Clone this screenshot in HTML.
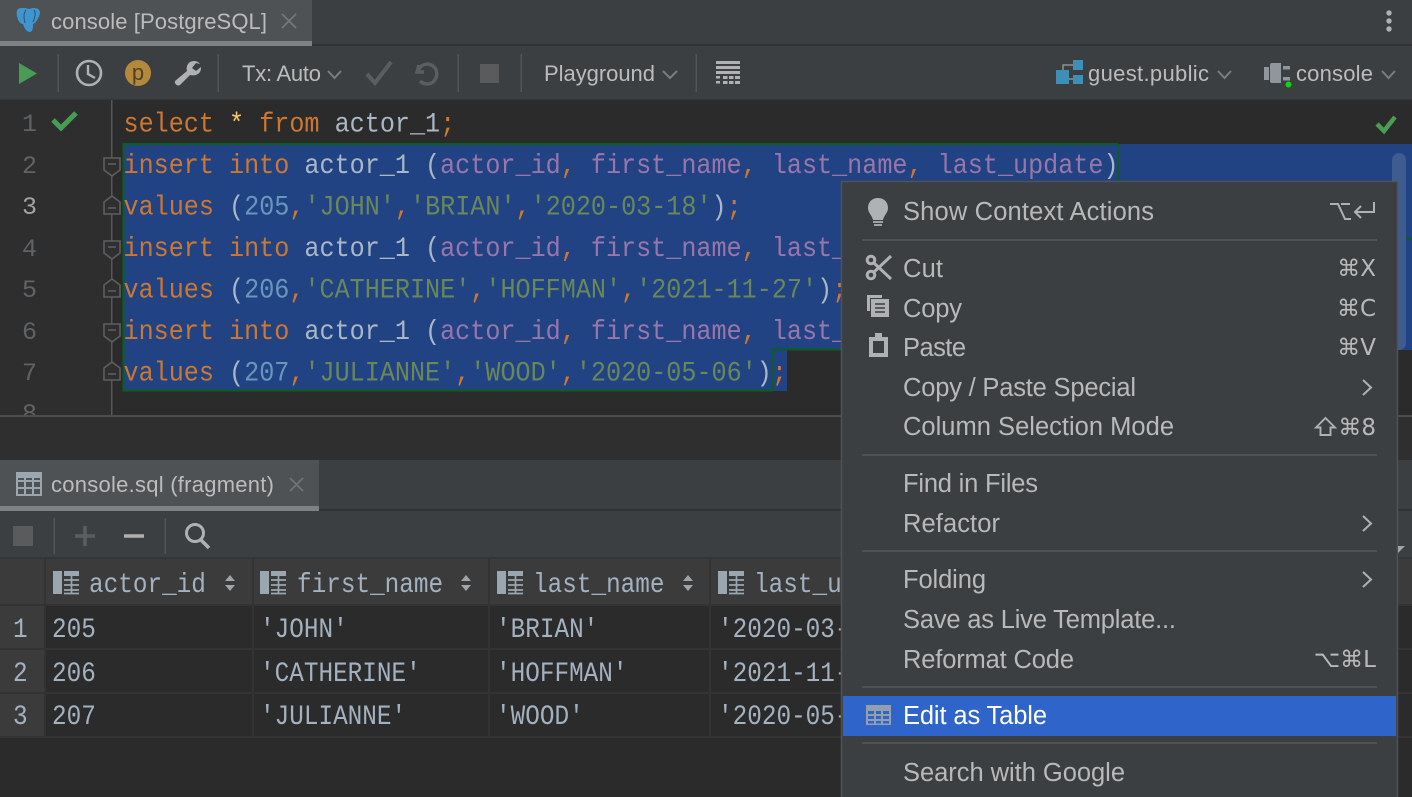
<!DOCTYPE html>
<html><head><meta charset="utf-8"><style>
html,body{margin:0;padding:0;background:#2b2b2b;width:1412px;height:797px;overflow:hidden}
svg{display:block;position:absolute;left:0;top:0}
text{white-space:pre}
.s{font-family:"Liberation Sans","DejaVu Sans",sans-serif;font-size:25.5px;fill:#b9b9b9}
.t{font-family:"Liberation Sans","DejaVu Sans",sans-serif;font-size:22px;fill:#bcbcbc}
.k{font-family:"DejaVu Sans","Liberation Sans",sans-serif;font-size:23px;fill:#b9b9b9}
.c{font-family:"Liberation Mono",monospace;font-size:28px}
.h{font-family:"Liberation Mono",monospace;font-size:28px;fill:#a3b1c0}
.n{font-family:"Liberation Mono",monospace;font-size:25px;fill:#606366}
.o{fill:#cc7832}.w{fill:#a9b7c6}.p{fill:#9876aa}.b{fill:#6897bb}.g{fill:#6a8759}.y{fill:#ffc66d}
</style></head><body>
<svg width="1412" height="797" viewBox="0 0 1412 797" xmlns="http://www.w3.org/2000/svg">
<defs>
<g id="fu" fill="none" stroke="#5c5f61" stroke-width="1.6"><path d="M0-10 L-8-4 V8 H8 V-4 Z" fill="#2f2f2f"/><path d="M-4 2H4"/></g>
<g id="fd" fill="none" stroke="#5c5f61" stroke-width="1.6"><path d="M-8-8 H8 V4 L0 10 L-8 4 Z" fill="#2f2f2f"/><path d="M-4-2H4"/></g>
<g id="ci" fill="none" stroke="#9aa7b0"><rect x="0" y="0" width="9" height="23" fill="#9aa7b0" stroke="none"/><rect x="11" y="0" width="15" height="5" fill="#9aa7b0" stroke="none"/><path d="M11 9H26M11 14H26M11 19H26M11 22.500H26M18.500 5V23" stroke-width="1.700"/></g>
<g id="so" fill="#a0a4a6"><path d="M-5-2 L0-8 L5-2Z"/><path d="M-5 2 L0 8 L5 2Z"/></g>
</defs>

<!-- top bar -->
<rect width="1412" height="100" fill="#3c3f41"/>
<rect width="312" height="41" fill="#4e5254"/>
<rect y="41" width="312" height="5" fill="#7e8284"/>
<rect x="312" y="44" width="1100" height="2" fill="#323232"/>
<rect y="99" width="1412" height="1" fill="#333537"/>
<path d="M21 8 C17 8 16 12 17 16 C18 21 20 24 23 24 C24 27 26 32 30 32 C33 32 33 27 33 24 C36 23 39 18 40 13 C40 9 37 8 33 8 L29 9 L25 8Z" fill="#3f95cd"/>
<path d="M26 10 C23 14 24 19 25 23 M34 10 C36 13 35 18 33 22" fill="none" stroke="#2d5470" stroke-width="1"/>
<text class="t" x="51" y="29" textLength="216">console [PostgreSQL]</text>
<path d="M282 14 L296 28 M296 14 L282 28" stroke="#73777a" stroke-width="1.8"/>
<circle cx="1389" cy="13" r="2.700" fill="#b0b0b0"/><circle cx="1389" cy="21" r="2.700" fill="#b0b0b0"/><circle cx="1389" cy="29" r="2.700" fill="#b0b0b0"/>

<!-- toolbar -->
<path d="M19 63 L37 73.500 L19 84Z" fill="#499c54"/>
<g fill="#515557"><rect x="57.500" y="54" width="1.500" height="38"/><rect x="217.500" y="54" width="1.500" height="38"/><rect x="457.500" y="54" width="1.500" height="38"/><rect x="520.500" y="54" width="1.500" height="38"/><rect x="695.500" y="54" width="1.500" height="38"/></g>
<circle cx="89" cy="73" r="12" fill="none" stroke="#afb1b3" stroke-width="2.600"/>
<path d="M88 65 V74 L95 78" fill="none" stroke="#afb1b3" stroke-width="2.400"/>
<circle cx="138" cy="73" r="13" fill="#b38a3c"/>
<text x="138" y="80" text-anchor="middle" font-family="Liberation Sans" font-size="22" fill="#50402a">p</text>
<path d="M200 64 C198 61 194 60 190 62 C187 64 186 68 187 71 L175 81 C174 83 177 87 180 85 L190 75 C194 76 198 75 200 72 C201 70 201 69 201 67 L196 71 L192 68 L196 63Z" fill="#afb1b3"/>
<text class="t" x="242" y="81" textLength="79">Tx: Auto</text>
<path d="M328 71 L334.500 78 L341 71" fill="none" stroke="#7a7e81" stroke-width="2"/>
<path d="M367 74 L375 83 L391 62" fill="none" stroke="#5b5e60" stroke-width="4"/>
<path d="M419 65 L417 72 L424 72 M418 71 C421 63 430 62 435 68 C439 74 436 83 428 84 C425 84 422 83 420 81" fill="none" stroke="#5b5e60" stroke-width="3.400"/>
<rect x="480" y="64" width="19" height="19" fill="#5a5b5c"/>
<text class="t" x="544" y="81" textLength="111">Playground</text>
<path d="M663 71 L670 78 L677 71" fill="none" stroke="#7a7e81" stroke-width="2"/>
<g fill="#afb1b3"><rect x="716" y="61" width="24" height="3"/><rect x="716" y="66" width="24" height="3"/><rect x="716" y="71" width="24" height="3"/><rect x="716" y="76" width="4" height="2.500"/><rect x="716" y="81" width="4" height="2.500"/><rect x="723" y="76" width="4.500" height="3"/><rect x="729" y="76" width="4.500" height="3"/><rect x="735" y="76" width="5" height="3"/><rect x="723" y="81" width="4.500" height="3"/><rect x="729" y="81" width="4.500" height="3"/><rect x="735" y="81" width="5" height="3"/></g>

<rect x="1056" y="70" width="13" height="14" fill="#3d8fb5"/><rect x="1073" y="60" width="10" height="10" fill="#3d8fb5"/><rect x="1073" y="75" width="10" height="9" fill="#3d8fb5"/>
<path d="M1063 70 V65 H1073 M1069 79 H1073" fill="none" stroke="#8a9299" stroke-width="1.500"/>
<text class="t" x="1088" y="81" textLength="121">guest.public</text>
<path d="M1218 71 L1224.500 78 L1231 71" fill="none" stroke="#7a7e81" stroke-width="2"/>
<path d="M1264 67 H1269 V80 H1264 Z" fill="#8f979e"/><path d="M1270 65 Q1270 63 1272 63 H1281 V83 H1272 Q1270 83 1270 81Z" fill="#8f979e"/><rect x="1283" y="66" width="7" height="3.500" fill="#8f979e"/><rect x="1283" y="77" width="7" height="3.500" fill="#8f979e"/>
<circle cx="1288.500" cy="84.500" r="3" fill="#0ed60e"/>
<text class="t" x="1296" y="81" textLength="77">console</text>
<path d="M1382 71 L1388.500 78 L1395 71" fill="none" stroke="#7a7e81" stroke-width="2"/>

<!-- editor -->
<rect y="100" width="1412" height="315" fill="#2b2b2b"/>
<rect y="100" width="112" height="315" fill="#2e2e2e"/>
<path d="M123 144 H1412 V350 H787 V391 H123Z" fill="#214283"/>
<path d="M123.500 391 V144 H1118 M772.500 391 V349.500 H842 M123 390.500 H773 M1118.500 144 V182 M1397 238.500 H1412" fill="none" stroke="#0f5c1f" stroke-width="2"/>
<rect x="1392" y="153" width="14" height="197" rx="7" fill="#3f5c91"/>
<rect x="1368" y="108" width="44" height="36" fill="#2b2b2b"/>
<path d="M1377 124 L1384 131 L1395 117" fill="none" stroke="#499c54" stroke-width="4.500"/>
<path d="M53 120 L61 128 L76 113" fill="none" stroke="#499c54" stroke-width="5"/>
<rect x="111" y="100" width="1.500" height="315" fill="#555759"/>
<use href="#fd" x="112" y="166"/><use href="#fu" x="112" y="206"/><use href="#fd" x="112" y="249"/><use href="#fu" x="112" y="289"/><use href="#fd" x="112" y="332"/><use href="#fu" x="112" y="372"/>

<g class="n">
<text x="22" y="131">1</text><text x="22" y="173">2</text><text x="22" y="214" fill="#a4a3a3" style="fill:#a4a3a3">3</text><text x="22" y="256">4</text><text x="22" y="297">5</text><text x="22" y="339">6</text><text x="22" y="380">7</text>
</g>
<svg x="0" y="400" width="60" height="15" viewBox="0 400 60 15"><text class="n" x="22" y="421">8</text></svg>

<text class="c" transform="translate(123.500 131.500) scale(.8976 1)"><tspan class="o">select </tspan><tspan class="y">*</tspan><tspan class="o"> from </tspan><tspan class="w">actor_1</tspan><tspan class="o">;</tspan></text>
<text class="c" transform="translate(123.500 173) scale(.8976 1)"><tspan class="o">insert into </tspan><tspan class="w">actor_1 (</tspan><tspan class="p">actor_id</tspan><tspan class="o">, </tspan><tspan class="p">first_name</tspan><tspan class="o">, </tspan><tspan class="p">last_name</tspan><tspan class="o">, </tspan><tspan class="p">last_update</tspan><tspan class="w">)</tspan></text>
<text class="c" transform="translate(123.500 214.500) scale(.8976 1)"><tspan class="o">values </tspan><tspan class="w">(</tspan><tspan class="b">205</tspan><tspan class="o">,</tspan><tspan class="g">'JOHN'</tspan><tspan class="o">,</tspan><tspan class="g">'BRIAN'</tspan><tspan class="o">,</tspan><tspan class="g">'2020-03-18'</tspan><tspan class="w">)</tspan><tspan class="o">;</tspan></text>
<text class="c" transform="translate(123.500 256) scale(.8976 1)"><tspan class="o">insert into </tspan><tspan class="w">actor_1 (</tspan><tspan class="p">actor_id</tspan><tspan class="o">, </tspan><tspan class="p">first_name</tspan><tspan class="o">, </tspan><tspan class="p">last_name</tspan><tspan class="o">, </tspan><tspan class="p">last_update</tspan><tspan class="w">)</tspan></text>
<text class="c" transform="translate(123.500 297.500) scale(.8976 1)"><tspan class="o">values </tspan><tspan class="w">(</tspan><tspan class="b">206</tspan><tspan class="o">,</tspan><tspan class="g">'CATHERINE'</tspan><tspan class="o">,</tspan><tspan class="g">'HOFFMAN'</tspan><tspan class="o">,</tspan><tspan class="g">'2021-11-27'</tspan><tspan class="w">)</tspan><tspan class="o">;</tspan></text>
<text class="c" transform="translate(123.500 339) scale(.8976 1)"><tspan class="o">insert into </tspan><tspan class="w">actor_1 (</tspan><tspan class="p">actor_id</tspan><tspan class="o">, </tspan><tspan class="p">first_name</tspan><tspan class="o">, </tspan><tspan class="p">last_name</tspan><tspan class="o">, </tspan><tspan class="p">last_update</tspan><tspan class="w">)</tspan></text>
<text class="c" transform="translate(123.500 380.500) scale(.8976 1)"><tspan class="o">values </tspan><tspan class="w">(</tspan><tspan class="b">207</tspan><tspan class="o">,</tspan><tspan class="g">'JULIANNE'</tspan><tspan class="o">,</tspan><tspan class="g">'WOOD'</tspan><tspan class="o">,</tspan><tspan class="g">'2020-05-06'</tspan><tspan class="w">)</tspan><tspan class="o">;</tspan></text>

<!-- divider + results -->
<rect y="415" width="1412" height="2" fill="#4c4d4e"/>
<rect y="417" width="1412" height="43" fill="#2f2f2f"/>
<rect y="460" width="1412" height="99" fill="#3c3f41"/>
<rect y="460" width="319" height="46" fill="#4e5254"/>
<rect y="506" width="319" height="5" fill="#7e8284"/>
<rect x="319" y="509" width="1093" height="2" fill="#323232"/>
<rect y="557" width="1412" height="2" fill="#333537"/>
<g fill="#9aa7b0"><rect x="16" y="473" width="26" height="5"/></g>
<path d="M17 473 H41 V495 H17Z M17 481H41 M17 488H41 M25 478V495 M33 478V495" fill="none" stroke="#9aa7b0" stroke-width="2"/>
<text class="t" x="51" y="492" textLength="223">console.sql (fragment)</text>
<path d="M290 478 L303 491 M303 478 L290 491" stroke="#6f7375" stroke-width="1.800"/>
<rect x="13" y="526" width="20" height="20" fill="#5a5b5c"/>
<rect x="53.500" y="518" width="1.500" height="36" fill="#515557"/><rect x="164.500" y="518" width="1.500" height="36" fill="#515557"/>
<path d="M85 526 V546 M75 536 H95" stroke="#5b5e60" stroke-width="3.500"/>
<path d="M124 536 H144" stroke="#afb1b3" stroke-width="3.500"/>
<circle cx="195" cy="533" r="8.500" fill="none" stroke="#afb1b3" stroke-width="3"/><path d="M201 540 L209 548" stroke="#afb1b3" stroke-width="3.500"/>

<rect y="559" width="1412" height="238" fill="#2b2b2b"/>
<rect y="559" width="1412" height="46" fill="#3b3b3b"/>
<rect y="605" width="44" height="132" fill="#3b3b3b"/>
<g fill="#333"><rect x="44" y="559" width="2" height="178"/><rect x="252" y="559" width="2" height="178"/><rect x="488" y="559" width="2" height="178"/><rect x="709" y="559" width="2" height="178"/><rect y="604" width="1412" height="2"/><rect y="648" width="1412" height="2"/><rect y="692" width="1412" height="2"/><rect y="736" width="1412" height="2"/></g>
<use href="#ci" x="53" y="571"/><use href="#ci" x="260" y="571"/><use href="#ci" x="497" y="571"/><use href="#ci" x="718" y="571"/>
<use href="#so" x="230" y="583"/><use href="#so" x="466" y="583"/><use href="#so" x="688" y="583"/>
<text class="h" transform="translate(89 592) scale(.87 1)">actor_id</text>
<text class="h" transform="translate(297 592) scale(.87 1)">first_name</text>
<text class="h" transform="translate(533 592) scale(.87 1)">last_name</text>
<text class="h" transform="translate(754 592) scale(.87 1)">last_update</text>
<text class="h" transform="translate(13 637) scale(.87 1)">1</text>
<text class="h" transform="translate(13 681) scale(.87 1)">2</text>
<text class="h" transform="translate(13 724) scale(.87 1)">3</text>
<text class="h" transform="translate(52 637) scale(.87 1)">205</text>
<text class="h" transform="translate(52 681) scale(.87 1)">206</text>
<text class="h" transform="translate(52 724) scale(.87 1)">207</text>
<text class="h" transform="translate(260 637) scale(.87 1)">'JOHN'</text>
<text class="h" transform="translate(260 681) scale(.87 1)">'CATHERINE'</text>
<text class="h" transform="translate(260 724) scale(.87 1)">'JULIANNE'</text>
<text class="h" transform="translate(496 637) scale(.87 1)">'BRIAN'</text>
<text class="h" transform="translate(496 681) scale(.87 1)">'HOFFMAN'</text>
<text class="h" transform="translate(496 724) scale(.87 1)">'WOOD'</text>
<text class="h" transform="translate(718 637) scale(.87 1)">'2020-03-18'</text>
<text class="h" transform="translate(718 681) scale(.87 1)">'2021-11-27'</text>
<text class="h" transform="translate(718 724) scale(.87 1)">'2020-05-06'</text>

<!-- context menu -->
<rect x="841.500" y="181.500" width="556" height="620" fill="#3c3f41" stroke="#505355" stroke-width="1.500"/>
<path d="M1398 546 H1405 L1398 553Z" fill="#a0a4a6"/>
<g fill="#505355"><rect x="862" y="239" width="515" height="2"/><rect x="862" y="454" width="515" height="2"/><rect x="862" y="550" width="515" height="2"/><rect x="862" y="686" width="515" height="2"/><rect x="862" y="742" width="515" height="2"/></g>
<rect x="843" y="696" width="553" height="40" fill="#2f65ca"/>

<path d="M878 198 C872 198 868 202 868 208 C868 213 872 215 873 220 H883 C884 215 888 213 888 208 C888 202 884 198 878 198Z" fill="#afb1b3"/><path d="M873 222 H883 M874 225 H882" stroke="#afb1b3" stroke-width="1.800"/>
<g fill="none" stroke="#afb1b3" stroke-width="3"><circle cx="871" cy="260" r="3.800"/><circle cx="871" cy="275" r="3.800"/><path d="M874 263 L891 279 M874 272 L891 256"/></g>
<path d="M867 295 H882 V298 H870 V311 H867Z" fill="#afb1b3"/><path d="M871 299 H889 V317 H871Z" fill="#afb1b3"/><path d="M875 304 H885 M875 308 H885 M875 312 H885" stroke="#3c3f41" stroke-width="1.600"/>
<path d="M869 337 H875 V333 H882 V337 H888 V357 H869Z M873 341 V353 H884 V341Z" fill="#afb1b3" fill-rule="evenodd"/>

<text class="s" x="903" y="220" textLength="251">Show Context Actions</text>
<text class="s" x="903" y="277" textLength="40">Cut</text>
<text class="s" x="903" y="317" textLength="59">Copy</text>
<text class="s" x="903" y="356" textLength="63">Paste</text>
<text class="s" x="903" y="396" textLength="233">Copy / Paste Special</text>
<text class="s" x="903" y="435" textLength="271">Column Selection Mode</text>
<text class="s" x="903" y="492" textLength="135">Find in Files</text>
<text class="s" x="903" y="532" textLength="97">Refactor</text>
<text class="s" x="903" y="588" textLength="83">Folding</text>
<text class="s" x="903" y="628" textLength="273">Save as Live Template...</text>
<text class="s" x="903" y="668" textLength="171">Reformat Code</text>
<text class="s" x="903" y="724" textLength="144" style="fill:#fff">Edit as Table</text>
<text class="s" x="903" y="781" textLength="222">Search with Google</text>

<g fill="none" stroke="#afb1b3" stroke-width="2"><path d="M1330 204 H1338 L1345 219 H1351 M1341 204 H1350"/><path d="M1374 202 V212 H1355 M1361 206 L1355 212 L1361 218"/></g>
<text class="k" x="1376" y="276" text-anchor="end">⌘X</text>
<text class="k" x="1376" y="316" text-anchor="end">⌘C</text>
<text class="k" x="1376" y="355" text-anchor="end">⌘V</text>
<text class="k" x="1376" y="435" text-anchor="end">⌘8</text>
<path d="M1325.500 418 L1335 427.500 H1330.500 V435 H1320.500 V427.500 H1316Z" fill="none" stroke="#afb1b3" stroke-width="1.900"/>
<text class="k" x="1376" y="667" text-anchor="end">⌥⌘L</text>
<g fill="none" stroke="#afb1b3" stroke-width="2"><path d="M1363 380 L1371 387.500 L1363 395"/><path d="M1363 516 L1371 523.500 L1363 531"/><path d="M1363 572 L1371 579.500 L1363 587"/></g>
<rect x="866" y="705" width="25" height="20" fill="#93a0ac"/>
<path d="M868 711 H874 V714 H868Z M876 711 H881 V714 H876Z M883 711 H889 V714 H883Z M868 716 H874 V719 H868Z M876 716 H881 V719 H876Z M883 716 H889 V719 H883Z M868 721 H874 V723.500 H868Z M876 721 H881 V723.500 H876Z M883 721 H889 V723.500 H883Z" fill="#2f65ca"/>
</svg>
</body></html>
